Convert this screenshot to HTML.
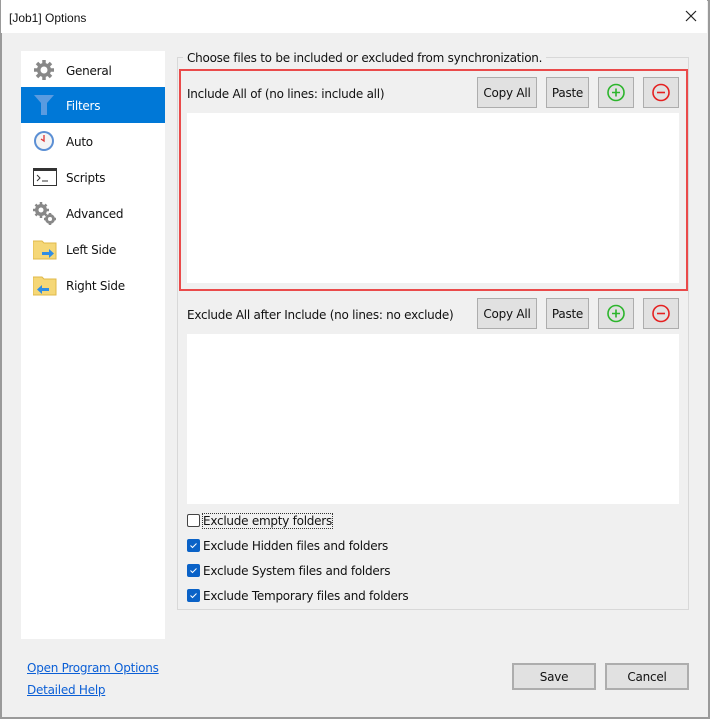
<!DOCTYPE html>
<html><head><style>
*{box-sizing:border-box;margin:0;padding:0}
body{width:710px;height:719px;overflow:hidden;font-family:Tahoma,"DejaVu Sans","Liberation Sans",sans-serif;font-size:12px;letter-spacing:-0.25px;color:#111;background:#f0f0f0;position:relative}
.win{position:absolute;left:0;top:0;width:710px;height:719px;border:2px solid #9a9a9a;border-top:1px solid #9a9a9a;background:#f0f0f0}
.title{position:absolute;left:1px;top:0;width:706px;height:33px;background:#fff}
.abs{position:absolute}
.btn{position:absolute;background:#e1e1e1;border:1px solid #adadad;text-align:center;font-size:12px}
.ta{position:absolute;background:#fff}
.nav{position:absolute;left:21px;top:51px;width:144px;height:588px;background:#fff}
.item{position:absolute;left:0;width:144px;height:36px;line-height:38px;padding-left:45px;font-size:12px}
.item svg{position:absolute;left:12px;top:7px}
.cb{position:absolute;left:187px;width:13px;height:13px;border-radius:2px;background:#0a62c7}
.cb.off{background:#fff;border:1px solid #444}
.cbl{position:absolute;left:203px;font-size:12px}
a{color:#0b5fd6;text-decoration:underline;position:absolute;left:27px;font-size:12px}
</style></head><body>
<div class="win"></div>
<div class="title"></div>
<div class="abs" style="left:9px;top:11px;font-size:12px;font-family:'Liberation Sans',sans-serif;letter-spacing:0">[Job1] Options</div>
<svg class="abs" style="left:685px;top:10px" width="12" height="12"><path d="M1 1L11 11M11 1L1 11" stroke="#222" stroke-width="1.2"/></svg>

<div class="nav">
 <div class="item" style="top:1px"><svg width="22" height="22" viewBox="0 0 22 22"><circle cx="11" cy="11" r="7" fill="#888"/><g stroke="#888" stroke-width="3.5"><path d="M11 1v20M1 11h20M4 4l14 14M18 4L4 18"/></g><circle cx="11" cy="11" r="3.5" fill="#fff"/></svg>General</div>
 <div class="item" style="top:36px;background:#0078d7;color:#fff"><svg width="22" height="22"><path d="M1 1h20l-7 8v12h-6v-12z" fill="#5a9be0"/></svg>Filters</div>
 <div class="item" style="top:72px"><svg width="22" height="22"><circle cx="11" cy="11" r="10" fill="#5b8fd4"/><circle cx="11" cy="11" r="8" fill="#f4f4f4"/><path d="M11 5v6l-3 -2" stroke="#d33" stroke-width="1.3" fill="none"/></svg>Auto</div>
 <div class="item" style="top:108px"><svg width="24" height="22"><rect x="0.5" y="2.5" width="23" height="17" fill="#fff" stroke="#333"/><rect x="0" y="2" width="24" height="3" fill="#333"/><path d="M4 9l3 3-3 3M9 15h6" stroke="#333" fill="none"/></svg>Scripts</div>
 <div class="item" style="top:144px"><svg width="24" height="24"><circle cx="8" cy="8" r="6" fill="#888"/><circle cx="8" cy="8" r="2.5" fill="#fff"/><circle cx="17" cy="17" r="5" fill="#888"/><circle cx="17" cy="17" r="2" fill="#fff"/><g stroke="#888" stroke-width="2.5"><path d="M8 0v16M0 8h16M2.5 2.5l11 11M13.5 2.5l-11 11M17 11v12M11 17h12"/></g><circle cx="8" cy="8" r="2.5" fill="#fff"/><circle cx="17" cy="17" r="2" fill="#fff"/></svg>Advanced</div>
 <div class="item" style="top:180px"><svg width="24" height="22"><path d="M0 3h9l2 2h12v16H0z" fill="#f5d777" stroke="#e0b84a"/><path d="M9 14h7v-3l5 4.5-5 4.5v-3H9z" fill="#2f8de4"/></svg>Left Side</div>
 <div class="item" style="top:216px"><svg width="24" height="22"><path d="M0 3h9l2 2h12v16H0z" fill="#f5d777" stroke="#e0b84a"/><path d="M16 14H9v-3l-5 4.5 5 4.5v-3h7z" fill="#2f8de4"/></svg>Right Side</div>
</div>

<div class="abs" style="left:177px;top:57px;width:512px;height:553px;border:1px solid #d8d8d8"></div>
<div class="abs" style="left:183px;top:51px;background:#f0f0f0;padding:0 4px;font-size:12px">Choose files to be included or excluded from synchronization.</div>
<div class="abs" style="left:179px;top:69px;width:509px;height:222px;border:2px solid #ea4a4a"></div>

<div class="abs" style="left:187px;top:87px">Include All of (no lines: include all)</div>
<div class="btn" style="left:477px;top:77px;width:60px;height:31px;line-height:30px">Copy All</div>
<div class="btn" style="left:546px;top:77px;width:43px;height:31px;line-height:30px">Paste</div>
<div class="btn" style="left:598px;top:77px;width:36px;height:31px"><svg width="34" height="29"><circle cx="17" cy="14.5" r="8" fill="none" stroke="#2cb52c" stroke-width="1.6"/><path d="M17 10.5v8M13 14.5h8" stroke="#2cb52c" stroke-width="1.6"/></svg></div>
<div class="btn" style="left:643px;top:77px;width:36px;height:31px"><svg width="34" height="29"><circle cx="17" cy="14.5" r="8" fill="none" stroke="#e52020" stroke-width="1.6"/><path d="M13 14.5h8" stroke="#e52020" stroke-width="1.6"/></svg></div>
<div class="ta" style="left:187px;top:113px;width:492px;height:170px"></div>

<div class="abs" style="left:187px;top:308px">Exclude All after Include (no lines: no exclude)</div>
<div class="btn" style="left:477px;top:298px;width:60px;height:31px;line-height:30px">Copy All</div>
<div class="btn" style="left:546px;top:298px;width:43px;height:31px;line-height:30px">Paste</div>
<div class="btn" style="left:598px;top:298px;width:36px;height:31px"><svg width="34" height="29"><circle cx="17" cy="14.5" r="8" fill="none" stroke="#2cb52c" stroke-width="1.6"/><path d="M17 10.5v8M13 14.5h8" stroke="#2cb52c" stroke-width="1.6"/></svg></div>
<div class="btn" style="left:643px;top:298px;width:36px;height:31px"><svg width="34" height="29"><circle cx="17" cy="14.5" r="8" fill="none" stroke="#e52020" stroke-width="1.6"/><path d="M13 14.5h8" stroke="#e52020" stroke-width="1.6"/></svg></div>
<div class="ta" style="left:187px;top:334px;width:492px;height:170px"></div>

<div class="cb off" style="top:514px"></div><div class="cbl" style="top:514px;outline:1px dotted #333">Exclude empty folders</div>
<div class="cb" style="top:539px"><svg width="13" height="13"><path d="M3.5 6.5l2 2 4-4" stroke="#fff" fill="none"/></svg></div><div class="cbl" style="top:539px">Exclude Hidden files and folders</div>
<div class="cb" style="top:564px"><svg width="13" height="13"><path d="M3.5 6.5l2 2 4-4" stroke="#fff" fill="none"/></svg></div><div class="cbl" style="top:564px">Exclude System files and folders</div>
<div class="cb" style="top:589px"><svg width="13" height="13"><path d="M3.5 6.5l2 2 4-4" stroke="#fff" fill="none"/></svg></div><div class="cbl" style="top:589px">Exclude Temporary files and folders</div>

<a style="top:661px">Open Program Options</a>
<a style="top:683px">Detailed Help</a>
<div class="btn" style="left:512px;top:663px;width:84px;height:27px;line-height:25px;border:2px solid #adadad">Save</div>
<div class="btn" style="left:605px;top:663px;width:84px;height:27px;line-height:25px;border:2px solid #adadad">Cancel</div>
</body></html>
